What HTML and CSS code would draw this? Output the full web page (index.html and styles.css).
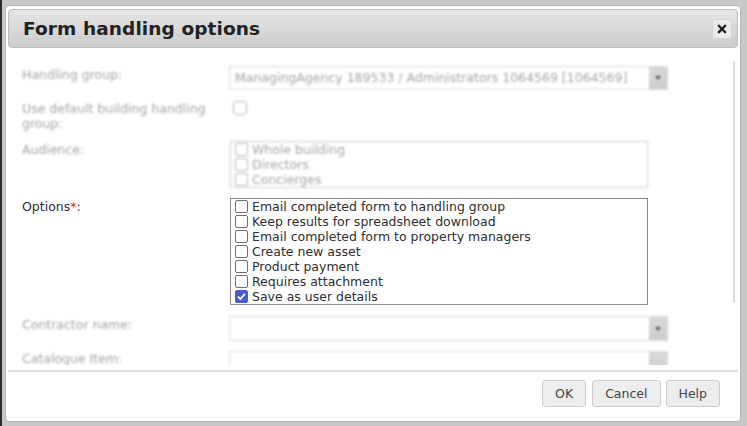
FILE: index.html
```html
<!DOCTYPE html>
<html lang="en">
<head>
  <meta charset="UTF-8">
  <title>Form handling options</title>
  <link rel="stylesheet" href="styles.css">
</head>
<body>
  <div class="dialog">
    <!-- title bar -->
    <div class="dlg-head">
      <h1>Form handling options</h1>
      <button class="close" aria-label="Close">
        <svg width="10" height="10" viewBox="0 0 10 10"><path d="M2 2L8 8M8 2L2 8" stroke="#1e1e1e" stroke-width="2.4" stroke-linecap="square"/></svg>
      </button>
    </div>

    <!-- scrolling form -->
    <div class="dlg-body">
      <div class="form-wrap">
        <div class="form">
          <div class="row muted">
            <div class="label">Handling group:</div>
            <div class="select">
              <span class="sel-text">ManagingAgency 189533 / Administrators 1064569 [1064569]</span>
              <span class="sel-btn"><i class="arrow"></i></span>
            </div>
          </div>

          <div class="row muted">
            <div class="label">Use default building handling group:</div>
            <span class="cb big"></span>
          </div>

          <div class="row muted">
            <div class="label">Audience:</div>
            <div class="list">
              <div class="item"><span class="cb"></span>Whole building</div>
              <div class="item"><span class="cb"></span>Directors</div>
              <div class="item"><span class="cb"></span>Concierges</div>
            </div>
          </div>

          <div class="row options">
            <div class="label">Options<span class="req">*</span>:</div>
            <div class="list dark">
              <div class="item"><span class="cb"></span>Email completed form to handling group</div>
              <div class="item"><span class="cb"></span>Keep results for spreadsheet download</div>
              <div class="item"><span class="cb"></span>Email completed form to property managers</div>
              <div class="item"><span class="cb"></span>Create new asset</div>
              <div class="item"><span class="cb"></span>Product payment</div>
              <div class="item"><span class="cb"></span>Requires attachment</div>
              <div class="item">
                <span class="cb on"><svg width="11" height="11" viewBox="0 0 11 11"><path d="M2 5.6L4.4 8L9 2.8" fill="none" stroke="#fff" stroke-width="1.8"/></svg></span>Save as user details
              </div>
            </div>
          </div>

          <div class="row muted">
            <div class="label">Contractor name:</div>
            <div class="select tall">
              <span class="sel-text"></span>
              <span class="sel-btn"><i class="arrow"></i></span>
            </div>
          </div>

          <div class="row muted last">
            <div class="label">Catalogue Item:</div>
            <div class="select tall">
              <span class="sel-text"></span>
              <span class="sel-btn low"><i class="arrow"></i></span>
            </div>
          </div>
        </div>
      </div>
      <div class="scroll"></div>
    </div>

    <!-- buttons -->
    <div class="dlg-foot">
      <button class="btn">OK</button>
      <button class="btn">Cancel</button>
      <button class="btn help">Help</button>
    </div>
  </div>
</body>
</html>
```

FILE: styles.css
```css
html {
  background: #c8c8c8;
}

body {
  margin: 0;
  height: 426px;
  box-sizing: border-box;
  border-left: 2px solid #2b2b2b;
  padding: 5px 0 0 3px;
  font-family: "DejaVu Sans", Verdana, sans-serif;
  font-size: 12.5px;
  color: #2e2e2e;
  overflow: hidden;
}

.dialog {
  width: 736px;
  height: 417px;
  box-sizing: border-box;
  background: #fff;
  border: 1px solid #b4b4b4;
  border-radius: 4px;
  display: flex;
  flex-direction: column;
}

/* title bar */
.dlg-head {
  margin: 3px 2px 0;
  height: 39px;
  box-sizing: border-box;
  border: 1px solid #bababa;
  border-radius: 4px;
  background: linear-gradient(#e6e6e6, #cccccc);
  display: flex;
  align-items: center;
  justify-content: space-between;
  padding: 0 5px 0 14px;
  flex: none;
}

.dlg-head h1 {
  margin: 0;
  font-size: 18.5px;
  font-weight: bold;
  color: #222;
  letter-spacing: 0.1px;
}

.close {
  width: 20px;
  height: 20px;
  box-sizing: border-box;
  padding: 0;
  border: 1px solid #d4d4d4;
  border-radius: 3px;
  background: #ebebeb;
  display: flex;
  align-items: center;
  justify-content: center;
}

/* form area */
.dlg-body {
  flex: 1;
  display: flex;
  align-items: flex-start;
  min-height: 0;
}

.form-wrap {
  flex: 1;
  height: 317px;
  overflow: hidden;
}

.form {
  padding: 18px 0 0 16px;
}

.row {
  display: flex;
  align-items: flex-start;
  margin-bottom: 10px;
}

.row.options {
  margin-bottom: 11px;
}

.label {
  width: 207px;
  flex: none;
  padding-top: 1px;
  line-height: 15px;
  box-sizing: border-box;
  padding-right: 20px;
}

.row.last .label {
  padding-top: 0;
}

.req {
  color: #d9262a;
}

.muted {
  filter: blur(1px);
  color: #a3a3a3;
}

.select {
  width: 439px;
  height: 24px;
  box-sizing: border-box;
  border: 1px solid #dadada;
  display: flex;
}

.select.tall {
  height: 25px;
}

.sel-text {
  flex: 1;
  padding-left: 5px;
  line-height: 22px;
  white-space: nowrap;
  overflow: hidden;
}

.sel-btn {
  width: 18px;
  background: linear-gradient(#d9d9d9, #cdcdcd);
  display: flex;
  align-items: center;
  justify-content: center;
}

.sel-btn.low {
  align-items: flex-end;
  padding-bottom: 2px;
}

.arrow {
  width: 0;
  height: 0;
  border-left: 3px solid transparent;
  border-right: 3px solid transparent;
  border-top: 4px solid #555;
}

.list {
  margin-left: 1px;
  width: 418px;
  box-sizing: border-box;
  border: 1px solid #cfcfcf;
  padding-left: 4px;
}

.list.dark {
  border-color: #8c8c8c;
}

.item {
  display: flex;
  align-items: center;
  height: 15px;
  line-height: 15px;
  white-space: nowrap;
}

.cb {
  width: 13px;
  height: 13px;
  box-sizing: border-box;
  border: 1px solid #6f6f6f;
  border-radius: 2px;
  background: #fff;
  margin-right: 4px;
  flex: none;
  display: flex;
  align-items: center;
  justify-content: center;
}

.muted .cb {
  border-color: #b8b8b8;
}

.cb.big {
  width: 14px;
  height: 14px;
  border-radius: 3px;
  margin: 1px 0 0 4px;
}

.cb.on {
  background: #4a5bd6;
  border-color: #4a5bd6;
}

.scroll {
  width: 2px;
  height: 242px;
  margin: 13px 5px 0 0;
  background: #dcdcdc;
  border-radius: 1px;
}

/* footer */
.dlg-foot {
  flex: none;
  height: 51px;
  box-sizing: border-box;
  margin: 0 2px;
  border-top: 2px solid #dcdcdc;
  display: flex;
  justify-content: flex-end;
  align-items: flex-start;
  gap: 6px;
  padding: 8px 18px 0 0;
}

.btn {
  height: 27px;
  padding: 0 12px;
  border: 1px solid #cdcdcd;
  border-radius: 3px;
  background: #ededed;
  font: inherit;
  color: #444;
}

.btn.help {
  margin-left: -1px;
}
```
